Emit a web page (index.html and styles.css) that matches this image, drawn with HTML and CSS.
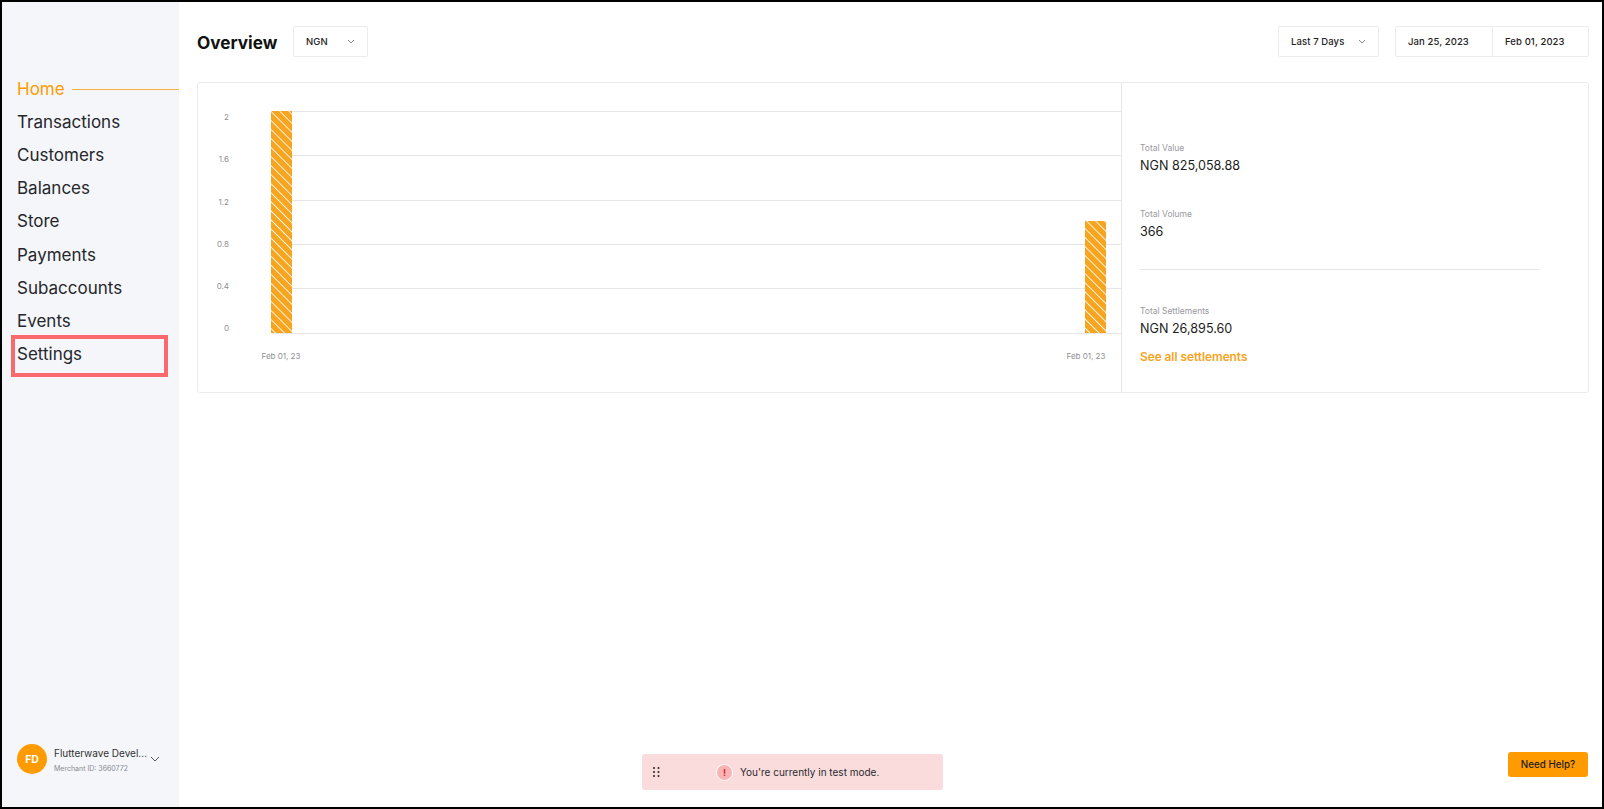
FILE: index.html
```html
<!DOCTYPE html>
<html lang="en">
<head>
<meta charset="utf-8">
<title>Overview</title>
<link rel="stylesheet" href="styles.css">
</head>
<body>
<div class="frame">
  <aside class="sidebar">
    <nav class="nav">
      <a class="nav-item active">Home</a>
      <a class="nav-item">Transactions</a>
      <a class="nav-item">Customers</a>
      <a class="nav-item">Balances</a>
      <a class="nav-item">Store</a>
      <a class="nav-item">Payments</a>
      <a class="nav-item">Subaccounts</a>
      <a class="nav-item">Events</a>
      <a class="nav-item highlighted">Settings</a>
    </nav>
    <div class="profile">
      <div class="avatar">FD</div>
      <div class="profile-text">
        <div class="profile-name">Flutterwave Devel...</div>
        <div class="profile-id">Merchant ID: 3660772</div>
      </div>
      <svg class="profile-chev" width="10" height="6" viewBox="0 0 10 6"><path d="M1 1l4 4 4-4" fill="none" stroke="#555" stroke-width="1"/></svg>
    </div>
  </aside>
  <main class="main">
    <header class="topbar">
      <h1 class="title">Overview</h1>
      <div class="select select-currency"><span>NGN</span><svg width="8" height="5" viewBox="0 0 8 5"><path d="M1 1l3 3 3-3" fill="none" stroke="#888" stroke-width="1"/></svg></div>
      <div class="spacer"></div>
      <div class="select select-range"><span>Last 7 Days</span><svg width="8" height="5" viewBox="0 0 8 5"><path d="M1 1l3 3 3-3" fill="none" stroke="#888" stroke-width="1"/></svg></div>
      <div class="dates"><span class="date date-from">Jan 25, 2023</span><span class="date date-to">Feb 01, 2023</span></div>
    </header>
    <section class="card">
      <div class="chart">
        <svg width="924" height="309" viewBox="0 0 924 309" class="chart-svg">
          <defs>
            <pattern id="hatch" width="6.4" height="6.4" patternUnits="userSpaceOnUse" patternTransform="rotate(45)">
              <rect width="6.4" height="6.4" fill="#f7a51f"/>
              <rect x="0" y="0" width="6.4" height="0.85" fill="#fff"/>
            </pattern>
          </defs>
          <g class="grid">
            <line x1="74" x2="924" y1="28.5" y2="28.5"/>
            <line x1="74" x2="924" y1="72.5" y2="72.5"/>
            <line x1="74" x2="924" y1="117.5" y2="117.5"/>
            <line x1="74" x2="924" y1="161.5" y2="161.5"/>
            <line x1="74" x2="924" y1="205.5" y2="205.5"/>
            <line x1="74" x2="924" y1="250.5" y2="250.5"/>
          </g>
          <rect x="73" y="28" width="21" height="222" fill="url(#hatch)"/>
          <rect x="887" y="138" width="21" height="112" fill="url(#hatch)"/>
          <g class="y-labels">
            <text x="31" y="37">2</text>
            <text x="31" y="79">1.6</text>
            <text x="31" y="122">1.2</text>
            <text x="31" y="164">0.8</text>
            <text x="31" y="206">0.4</text>
            <text x="31" y="248">0</text>
          </g>
          <g class="x-labels">
            <text x="83" y="276">Feb 01, 23</text>
            <text x="888" y="276">Feb 01, 23</text>
          </g>
        </svg>
      </div>
      <div class="stats">
        <div class="stat stat-value">
          <div class="stat-label">Total Value</div>
          <div class="stat-num">NGN 825,058.88</div>
        </div>
        <div class="stat stat-volume">
          <div class="stat-label">Total Volume</div>
          <div class="stat-num">366</div>
        </div>
        <hr class="stat-rule">
        <div class="stat">
          <div class="stat-label">Total Settlements</div>
          <div class="stat-num">NGN 26,895.60</div>
          <a class="stat-link">See all settlements</a>
        </div>
      </div>
    </section>
  </main>
  <div class="toast">
    <svg class="toast-grip" width="7" height="10" viewBox="0 0 7 10"><g fill="#222"><circle cx="1" cy="1" r="1"/><circle cx="5.5" cy="1" r="1"/><circle cx="1" cy="5" r="1"/><circle cx="5.5" cy="5" r="1"/><circle cx="1" cy="9" r="1"/><circle cx="5.5" cy="9" r="1"/></g></svg>
    <span class="toast-icon">!</span>
    <span class="toast-text">You're currently in test mode.</span>
  </div>
  <button class="help">Need Help?</button>
</div>
</body>
</html>
```
FILE: styles.css
```css
*, *::after { box-sizing: border-box; }
html, body { margin: 0; height: 100%; background: #fff; }
body { font-family: "Inter", "Liberation Sans", sans-serif; color: #16161a; }

.frame {
  position: relative;
  width: 1604px;
  height: 809px;
  border: 2px solid #000;
  display: flex;
  overflow: hidden;
  background: #fff;
}

.sidebar {
  width: 177px;
  flex: none;
  background: #f4f6fa;
  display: flex;
  flex-direction: column;
  justify-content: space-between;
  padding: 71px 0 31px 0;
}
.nav { display: flex; flex-direction: column; }
.nav-item {
  position: relative;
  height: 33.1px;
  line-height: 33px;
  padding-left: 15px;
  font-size: 17px;
  color: #26262b;
  display: flex;
  align-items: center;
}
.nav-item.active { color: #ff9b00; }
.nav-item.active::after {
  content: "";
  flex: 1;
  height: 1px;
  background: #ff9b00;
  margin-left: 7px;
  opacity: .75;
}
.nav-item.highlighted::after {
  content: "";
  position: absolute;
  left: 9px;
  top: -3px;
  width: 157px;
  height: 42px;
  border: 4px solid #f9696d;
}

.profile { display: flex; align-items: center; padding-left: 15px; }
.avatar {
  width: 30px;
  height: 30px;
  border-radius: 50%;
  background: #ff9b00;
  color: #fff;
  font-size: 10.5px;
  font-weight: 700;
  display: flex;
  align-items: center;
  justify-content: center;
  flex: none;
}
.profile-text { margin-left: 7px; width: 94px; padding-top: 4px; }
.profile-name { font-size: 10px; line-height: 14px; color: #333; white-space: nowrap; }
.profile-id { font-size: 7px; line-height: 14px; margin-top: 2px; color: #8a8a8f; white-space: nowrap; }
.profile-chev { margin: 0 0 0 2px; }

.main { flex: 1; padding: 24px 13px 0 18px; min-width: 0; }
.topbar { display: flex; align-items: center; height: 31px; }
.title { margin: 2px 15px 0 0; font-size: 17.2px; font-weight: 700; color: #111; width: 81px; white-space: nowrap; }
.select, .dates {
  height: 31px;
  border: 1px solid #ececef;
  border-radius: 2px;
  display: flex;
  align-items: center;
  font-size: 9.5px;
  font-weight: 500;
  letter-spacing: .1px;
  color: #222;
}
.select { justify-content: space-between; padding: 0 12px 0 12px; }
.select-currency { width: 75px; }
.select-range { width: 101px; margin-right: 16px; }
.spacer { flex: 1; }
.dates { width: 194px; }
.date { display: flex; align-items: center; height: 100%; padding-left: 12px; }
.date-from { width: 97px; border-right: 1px solid #ececef; }
.date-to { flex: 1; }

.card {
  margin-top: 25px;
  height: 311px;
  border: 1px solid #ececef;
  border-radius: 3px;
  display: flex;
}
.chart { width: 924px; flex: none; border-right: 1px solid #e6e6e9; }
.chart-svg { display: block; }
.grid line { stroke: #e6e6e9; stroke-width: 1; }
.y-labels text { font-size: 8px; fill: #8f8f93; text-anchor: end; }
.x-labels text { font-size: 8px; fill: #8f8f93; text-anchor: middle; }

.stats { flex: 1; padding: 59px 49px 0 18px; }
.stat-label { font-size: 8.5px; line-height: 12px; color: #9a9a9e; }
.stat-num { font-size: 12.6px; line-height: 16px; margin-top: 4px; color: #1c1c20; }
.stat-volume { margin-top: 34px; }
.stat-rule { border: 0; border-top: 1px solid #e6e6e9; margin: 29px 0 35px; }
.stat-link { display: block; margin-top: 13px; font-size: 11.8px; font-weight: 600; line-height: 14px; color: #f9a321; }

.toast {
  position: absolute;
  left: 640px;
  top: 752px;
  width: 301px;
  height: 36px;
  background: #fadcdd;
  border-radius: 3px;
  display: flex;
  align-items: center;
  padding-left: 11px;
}
.toast-icon {
  width: 17px;
  height: 17px;
  border-radius: 50%;
  background: #f8b4b4;
  border: 1px solid #fff;
  color: #d0202a;
  font-size: 9px;
  font-weight: 700;
  display: flex;
  align-items: center;
  justify-content: center;
  margin-left: 56px;
}
.toast-text { margin-left: 7px; font-size: 10px; color: #2a2a2e; white-space: nowrap; }

.help {
  position: absolute;
  right: 14px;
  top: 750px;
  width: 80px;
  height: 25px;
  border: 0;
  border-radius: 3px;
  background: #ff9b00;
  color: #1d1d20;
  font-family: inherit;
  font-size: 9.8px;
  font-weight: 500;
  padding: 0;
}
```
